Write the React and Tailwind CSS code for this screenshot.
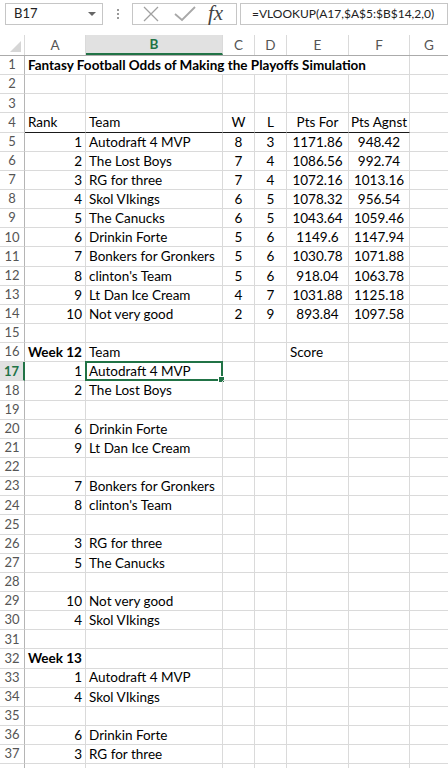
import React from 'react'

const colWidths = [61, 137, 32, 32, 62, 61]
const letters = ['A', 'B', 'C', 'D', 'E', 'F']

// each row: [A, B, C, D, E, F]; objects override alignment / weight
const rows = [
    null, // row 1 handled separately (title overflow)
    [],
    [],
    ['Rank', 'Team', 'W', 'L', 'Pts For', 'Pts Agnst'],
    [1, 'Autodraft 4 MVP', 8, 3, '1171.86', '948.42'],
    [2, 'The Lost Boys', 7, 4, '1086.56', '992.74'],
    [3, 'RG for three', 7, 4, '1072.16', '1013.16'],
    [4, 'Skol VIkings', 6, 5, '1078.32', '956.54'],
    [5, 'The Canucks', 6, 5, '1043.64', '1059.46'],
    [6, 'Drinkin Forte', 5, 6, '1149.6', '1147.94'],
    [7, 'Bonkers for Gronkers', 5, 6, '1030.78', '1071.88'],
    [8, "clinton's Team", 5, 6, '918.04', '1063.78'],
    [9, 'Lt Dan Ice Cream', 4, 7, '1031.88', '1125.18'],
    [10, 'Not very good', 2, 9, '893.84', '1097.58'],
    [],
    [{ v: 'Week 12', bold: true }, 'Team', '', '', { v: 'Score', left: true }],
    [1, 'Autodraft 4 MVP'],
    [2, 'The Lost Boys'],
    [],
    [6, 'Drinkin Forte'],
    [9, 'Lt Dan Ice Cream'],
    [],
    [7, 'Bonkers for Gronkers'],
    [8, "clinton's Team"],
    [],
    [3, 'RG for three'],
    [5, 'The Canucks'],
    [],
    [10, 'Not very good'],
    [4, 'Skol VIkings'],
    [],
    [{ v: 'Week 13', bold: true }],
    [1, 'Autodraft 4 MVP'],
    [4, 'Skol VIkings'],
    [],
    [6, 'Drinkin Forte'],
    [3, 'RG for three'],
    [],
]

function Cell({ value, col, underline, selected }) {
    let v = value
    let bold = false
    let left = false
    if (v && typeof v === 'object') {
        bold = v.bold
        left = v.left
        v = v.v
    }
    let align = 'justify-start'
    if (col === 0 && typeof v === 'number') align = 'justify-end'
    if (col >= 2 && !left) align = 'justify-center'
    return (
        <div
            style={{ width: colWidths[col] }}
            className={`relative flex-none flex items-center px-[3px] border-r border-[#dadada] ${underline ? 'border-b border-b-[#1a1a1a]' : 'border-b'} ${align} ${bold ? 'font-bold' : ''}`}
        >
            {v !== undefined && v !== '' ? <span className="whitespace-nowrap">{v}</span> : null}
            {selected && (
                <>
                    <div className="absolute -left-[1px] -top-[1px] -right-[1px] -bottom-[1px] border-2 border-[#217346] pointer-events-none" />
                    <div className="absolute -right-[3px] -bottom-[3px] w-[5px] h-[5px] bg-[#217346] border border-white box-content" />
                </>
            )}
        </div>
    )
}

function RowHeader({ n, active }) {
    return (
        <div
            className={`w-[25px] flex-none flex items-center justify-center text-[13px] border-b border-[#dadada] ${active ? 'bg-[#e1e1e1] text-[#217346] font-bold border-r-2 border-r-[#217346]' : 'text-[#555] border-r border-r-[#b5b5b5]'}`}
        >
            {n}
        </div>
    )
}

function App() {
    return (
        <div
            className="w-[448px] h-[768px] overflow-hidden bg-white text-black text-[13.5px]"
            style={{ fontFamily: 'Lato, "Open Sans", sans-serif' }}
        >
            {/* formula bar */}
            <div className="h-[35px] flex items-start pt-[3px] pl-[5px]">
                <div className="w-[98px] h-[22px] border border-[#c6c6c6] flex items-center justify-between pl-[8px] pr-[6px]">
                    <span className="text-[13px] text-[#222]">B17</span>
                    <span className="w-0 h-0 border-l-[4px] border-r-[4px] border-t-[4px] border-l-transparent border-r-transparent border-t-[#666]" />
                </div>
                <div className="w-[29px] h-[22px] flex flex-col items-center justify-center gap-[2px]">
                    <span className="w-[2px] h-[2px] bg-[#999]" />
                    <span className="w-[2px] h-[2px] bg-[#999]" />
                    <span className="w-[2px] h-[2px] bg-[#999]" />
                </div>
                <div className="w-[105px] h-[22px] border border-[#c6c6c6] flex items-center pl-[9px]">
                    <svg width="18" height="16" viewBox="0 0 18 16">
                        <path d="M2 1 L16 15 M16 1 L2 15" stroke="#a0a0a0" strokeWidth="1.3" fill="none" />
                    </svg>
                    <svg width="22" height="16" viewBox="0 0 22 16" className="ml-[14px]">
                        <path d="M1 8 L8 14 L21 1" stroke="#a8a8a8" strokeWidth="1.8" fill="none" />
                    </svg>
                    <span
                        className="italic text-[21px] text-[#444] ml-[12px] leading-none -mt-[2px]"
                        style={{ fontFamily: '"Liberation Serif", serif' }}
                    >
                        fx
                    </span>
                </div>
                <div className="flex-1 h-[22px] border border-[#c6c6c6] ml-[3px] flex items-center pl-[11px] text-[12px] text-[#222] whitespace-nowrap overflow-hidden">
                    =VLOOKUP(A17,$A$5:$B$14,2,0)
                </div>
            </div>

            {/* column headers */}
            <div className="h-[21px] flex border-b border-[#ababab]">
                <div className="w-[25px] flex-none border-r border-[#dadada] flex items-end justify-end pr-[3px] pb-[3px]">
                    <span className="w-0 h-0" style={{ borderBottom: '11px solid #d6d6d6', borderLeft: '11px solid transparent' }} />
                </div>
                {letters.map((l, i) => (
                    <div
                        key={l}
                        style={{ width: colWidths[i] }}
                        className={`flex-none flex items-center justify-center border-r border-[#dadada] text-[13.5px] ${i === 1 ? 'bg-[#e1e1e1] text-[#217346] font-bold border-b-2 border-b-[#217346]' : 'text-[#555]'}`}
                    >
                        {l}
                    </div>
                ))}
                <div className="flex-1 flex items-center justify-center text-[13.5px] text-[#555]">G</div>
            </div>

            {/* grid */}
            <div className="flex flex-col">
                {rows.map((r, idx) => {
                    const n = idx + 1
                    if (n === 1) {
                        return (
                            <div key={n} className="h-[19.15px] flex">
                                <RowHeader n={n} />
                                <div className="w-[385px] flex-none flex items-center px-[3px] border-r border-b border-[#dadada] font-bold whitespace-nowrap">
                                    Fantasy Football Odds of Making the Playoffs Simulation
                                </div>
                                <div className="flex-1 border-b border-[#dadada]" />
                            </div>
                        )
                    }
                    return (
                        <div key={n} className="h-[19.15px] flex">
                            <RowHeader n={n < 38 ? n : ''} active={n === 17} />
                            {colWidths.map((_, c) => (
                                <Cell key={c} col={c} value={r[c]} underline={n === 4} selected={n === 17 && c === 1} />
                            ))}
                            <div className="flex-1 border-b border-[#dadada]" />
                        </div>
                    )
                })}
            </div>
        </div>
    )
}

export default App
